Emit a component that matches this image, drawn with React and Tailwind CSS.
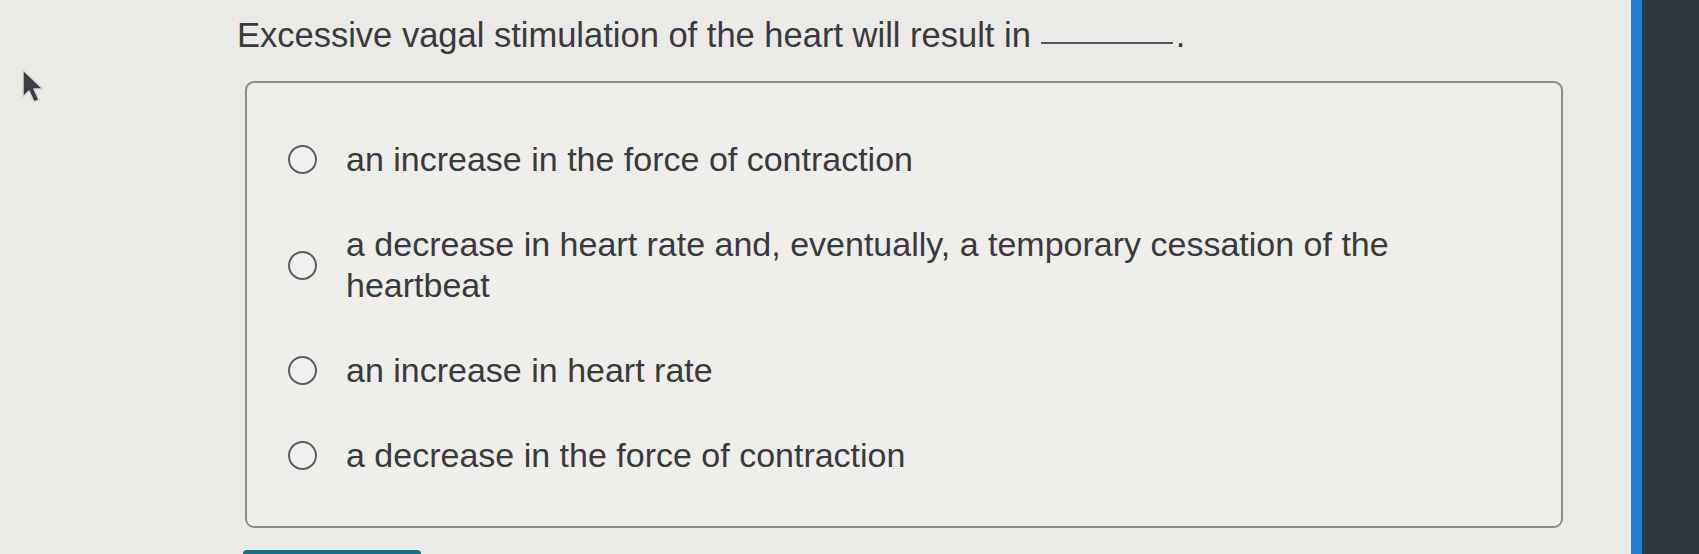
import React from 'react';

const options = [
  'an increase in the force of contraction',
  'a decrease in heart rate and, eventually, a temporary cessation of the heartbeat',
  'an increase in heart rate',
  'a decrease in the force of contraction',
];

const Cursor = () => (
  <svg className="absolute left-[20px] top-[68px]" width="26" height="38" viewBox="0 0 26 38">
    <path d="M3 2 L3 29 L9 23 L14 34 L19 32 L14 21 L23 21 Z" fill="#3b3d42" stroke="#d9d8d4" strokeWidth="1.5" strokeLinejoin="round" />
  </svg>
);

const App = () => {
  return (
    <div className="relative w-full h-[554px] overflow-hidden flex bg-[#ebeae6] font-['Liberation_Sans',Arial,sans-serif] text-[#393a40]">
      <Cursor />
      <div className="flex-1 pl-[237px] pt-[15px]">
        <h1 className="text-[34.5px] leading-[40px] flex items-baseline">
          <span>Excessive vagal stimulation of the heart will result in</span>
          <span className="inline-block w-[132px] ml-[10px] border-b-2 border-[#55565a] translate-y-[-3px]"></span>
          <span className="ml-[3px]">.</span>
        </h1>
        <div className="mt-[26px] ml-[8px] w-[1318px] h-[447px] border-2 border-[#8f8e8e] rounded-[9px] bg-[#efeeea] pt-[56px] pl-[41px] flex flex-col gap-[44px]">
          {options.map((opt, i) => (
            <label key={i} className="flex items-center gap-[29px]">
              <span className="shrink-0 w-[29px] h-[29px] rounded-full border-2 border-[#5e5f64] bg-[#f1f0ec]"></span>
              <span className="max-w-[1100px] text-[34px] leading-[41px]">{opt}</span>
            </label>
          ))}
        </div>
        <div className="mt-[22px] ml-[6px] w-[178px] h-[30px] rounded-t-[4px] bg-[#1d6c84]"></div>
      </div>
      <div className="w-[11px] h-full bg-[#1f7fd9]"></div>
      <div className="w-[57px] h-full bg-[#2d393f]"></div>
    </div>
  );
};

export default App;
